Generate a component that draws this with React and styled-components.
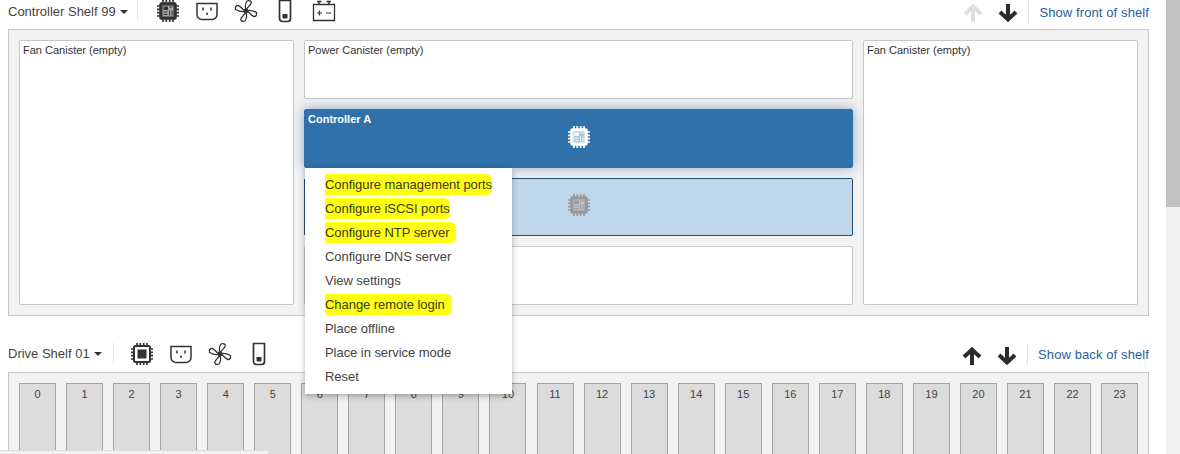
import React from 'react';
import styled, { createGlobalStyle } from 'styled-components';

const GlobalStyle = createGlobalStyle`
  html, body { margin: 0; padding: 0; background: #fff; overflow: hidden; }
  body { font-family: "Liberation Sans", Arial, sans-serif; color: #333; }
`;

const Page = styled.div`
  position: relative;
  width: 1180px;
  height: 454px;
  overflow: hidden;
  background: #fff;
`;
const Content = styled.div`
  width: 1141px;
  margin-left: 8px;
`;
const ShelfBar = styled.div`
  display: flex;
  align-items: center;
  height: ${p => p.$height}px;
  padding-bottom: ${p => p.$bottom}px;
  padding-top: ${p => p.$top || 0}px;
  box-sizing: border-box;
`;
const ShelfTitle = styled.div`
  font-size: 13px;
  color: #444;
  white-space: nowrap;
  width: ${p => p.$width}px;
`;
const Caret = styled.span`
  display: inline-block;
  width: 0;
  height: 0;
  margin-left: 4px;
  vertical-align: middle;
  border-top: 4px solid #333;
  border-left: 4px solid transparent;
  border-right: 4px solid transparent;
`;
const Divider = styled.div`
  width: 1px;
  height: 20px;
  background: #e3e3e3;
`;
const IconRow = styled.div`
  display: flex;
  align-items: center;
  gap: 15px;
  margin-left: ${p => p.$left}px;
  margin-top: ${p => p.$lift || 0}px;
`;
const BarEnd = styled.div`
  display: flex;
  align-items: center;
  margin-left: auto;
  margin-top: ${p => p.$lift}px;
`;
const ArrowBox = styled.div`
  display: flex;
  align-items: center;
  gap: 15px;
  margin-top: 2px;
  margin-right: ${p => p.$right}px;
`;
const ShelfLink = styled.a`
  font-size: 13px;
  letter-spacing: 0.1px;
  color: #2a5d9c;
  margin-left: 10px;
  white-space: nowrap;
`;
const FrontPanel = styled.div`
  display: grid;
  grid-template-columns: 275px 549px 275px;
  gap: 10px;
  height: 287px;
  box-sizing: border-box;
  padding: 10px;
  background: #f2f2f2;
  border: 1px solid #c8c8c8;
`;
const Canister = styled.div`
  background: #fff;
  border: 1px solid #c6c6c6;
  border-radius: 2px;
  padding: 3px;
  font-size: 11px;
  color: #333;
`;
const MiddleColumn = styled.div`
  display: grid;
  grid-template-rows: 59px 59px 58px 59px;
  gap: 10px;
`;
const Controller = styled.div`
  position: relative;
  display: flex;
  align-items: center;
  justify-content: center;
  background: ${p => (p.$active ? '#3071a9' : '#c0d7ea')};
  border: 1px solid ${p => (p.$active ? '#3071a9' : '#1f5078')};
  border-radius: 2px;
  box-shadow: ${p => (p.$active ? '0 0 12px rgba(40, 90, 140, 0.5)' : 'none')};
  color: #fff;
  font-size: 11px;
  font-weight: bold;
`;
const ControllerName = styled.span`
  position: absolute;
  left: 3px;
  top: 3px;
`;
const ControllerIcon = styled.div`
  display: flex;
  margin-top: -4px;
`;
const DrivePanel = styled.div`
  display: flex;
  gap: 10.06px;
  height: 120px;
  box-sizing: border-box;
  padding: 10px;
  background: #f2f2f2;
  border: 1px solid #c8c8c8;
`;
const DriveSlot = styled.div`
  flex: 0 0 37px;
  height: 100px;
  box-sizing: border-box;
  padding-top: 4px;
  background: #dcdcdc;
  border: 1px solid #a3a3a3;
  text-align: center;
  font-size: 11px;
  color: #444;
`;
const Menu = styled.ul`
  position: absolute;
  left: 305px;
  top: 168px;
  width: 207px;
  height: 226px;
  box-sizing: border-box;
  margin: 0;
  padding: 5px 0 0 20px;
  list-style: none;
  background: #fff;
  box-shadow: 0 2px 6px rgba(0, 0, 0, 0.3);
`;
const MenuItem = styled.li`
  height: 24px;
  line-height: 24px;
  font-size: 13px;
  letter-spacing: -0.05px;
  color: #444;
  white-space: nowrap;
`;
const Marked = styled.span`
  background: #ffff14;
  color: #3a3a1a;
  padding: 3px ${p => p.$tail}px 3px 0;
  border-radius: 1px 6px 5px 1px;
`;
const ScrollThumb = styled.div`
  position: absolute;
  right: 0;
  top: 0;
  bottom: 0;
  width: 14px;
  background: linear-gradient(#c1c1c1 0 207px, #f1f1f1 207px);
`;
const BottomStrip = styled.div`
  position: absolute;
  left: 0;
  bottom: 0;
  width: 268px;
  height: 3px;
  background: #f1f1f1;
  border-top: 1px solid #dcdcdc;
`;

function IconSvg({ size = 24, color = '#333', children }) {
  return (
    <svg width={size} height={size} viewBox="0 0 24 24" fill="none" stroke={color} strokeWidth="1.5" style={{ display: 'block' }}>
      {children}
    </svg>
  );
}

function ChipPins() {
  return (
    <path d="M7 1v3M10.300 1v3M13.700 1v3M17 1v3M7 20v3M10.300 20v3M13.700 20v3M17 20v3M1 7h3M1 10.300h3M1 13.700h3M1 17h3M20 7h3M20 10.300h3M20 13.700h3M20 17h3" strokeWidth="1.700" />
  );
}

function BoardChip({ color = '#333', ink = '#a6a6a6', size = 24 }) {
  return (
    <IconSvg color={color} size={size}>
      <ChipPins />
      <rect x="4" y="4" width="16" height="16" rx="1.5" fill={color} strokeWidth="1.500" />
      <rect x="6.500" y="6.500" width="11" height="11" fill={ink} stroke="none" />
      <rect x="7.500" y="7.500" width="4.500" height="3.500" fill={color} stroke="none" />
      <path d="M13.500 8h3M7.500 13h4M7.500 15.500h4M13.500 11.500v5M16 11.500v5" strokeWidth="1" stroke={color} />
    </IconSvg>
  );
}

function SolidChip() {
  return (
    <IconSvg>
      <ChipPins />
      <rect x="4" y="4" width="16" height="16" rx="1.5" strokeWidth="2" />
      <rect x="7.500" y="7.500" width="9" height="9" fill="#333" stroke="none" />
    </IconSvg>
  );
}

function Outlet() {
  return (
    <IconSvg>
      <path d="M2 4.500h20v11a5 5 0 0 1-5 5H7a5 5 0 0 1-5-5z" />
      <path d="M8 8.500v3M16 8.500v3M12 13.500v2.500" />
    </IconSvg>
  );
}

function Fan() {
  return (
    <IconSvg>
      <path d="M12 11c-1-3-1-6 1-9 3-1 5 .5 4 2.500-1 2-3.500 3.500-5 6.500z" strokeWidth="1.300" />
      <path d="M13 11.500c3-.5 6 0 9.500 2 .5 3-1 4.500-3 3.800-2-.8-4-3.300-6.500-5.800z" strokeWidth="1.300" />
      <path d="M12 13c1 3 1 6-1 9-3 1-5-.5-4-2.500 1-2 3.500-3.500 5-6.500z" strokeWidth="1.300" />
      <path d="M11 12.500c-3 .5-6 0-9.500-2-.5-3 1-4.500 3-3.800 2 .8 4 3.300 6.500 5.800z" strokeWidth="1.300" />
      <circle cx="12" cy="12" r="2.400" fill="#333" stroke="none" />
    </IconSvg>
  );
}

function Tube() {
  return (
    <IconSvg>
      <path d="M6.500 1.500h11v18a3 3 0 0 1-3 3h-5a3 3 0 0 1-3-3z" strokeWidth="1.700" />
      <path d="M9.500 15h5v3.500a1 1 0 0 1-1 1h-3a1 1 0 0 1-1-1z" fill="#333" stroke="none" />
    </IconSvg>
  );
}

function Battery() {
  return (
    <IconSvg>
      <path d="M1.500 5.500h21v16h-21z" strokeWidth="1.300" />
      <path d="M5 2.500h4.500M14.500 2.500h4.500M7 2.500v3M17 2.500v3" strokeWidth="1.500" />
      <path d="M5 14h5M7.500 11.500v5M14 14h5" strokeWidth="1.200" />
    </IconSvg>
  );
}

function Arrow({ up, color = '#2b2b2b' }) {
  return (
    <svg width="20" height="18" viewBox="0 0 20 18" fill="none" stroke={color} strokeWidth="4" style={{ display: 'block', transform: up ? 'rotate(180deg)' : 'none' }}>
      <path d="M10 0v15M2 8 10 15.500l8-7.500" />
    </svg>
  );
}

const menuItems = [
  ['Configure management ports', 0],
  ['Configure iSCSI ports', 0],
  ['Configure NTP server', 7],
  ['Configure DNS server'],
  ['View settings'],
  ['Change remote login', 7],
  ['Place offline'],
  ['Place in service mode'],
  ['Reset'],
];

export default function App() {
  return (
    <Page>
      <GlobalStyle />
      <Content>
        <ShelfBar $height={29} $bottom={7}>
          <ShelfTitle $width={129}>Controller Shelf 99<Caret /></ShelfTitle>
          <Divider />
          <IconRow $left={18}>
            <BoardChip />
            <Outlet />
            <Fan />
            <Tube />
            <Battery />
          </IconRow>
          <BarEnd $lift={2}>
            <ArrowBox $right={10}>
              <Arrow up color="#dedede" />
              <Arrow />
            </ArrowBox>
            <Divider />
            <ShelfLink>Show front of shelf</ShelfLink>
          </BarEnd>
        </ShelfBar>
        <FrontPanel>
          <Canister>Fan Canister (empty)</Canister>
          <MiddleColumn>
            <Canister>Power Canister (empty)</Canister>
            <Controller $active>
              <ControllerName>Controller A</ControllerName>
              <ControllerIcon><BoardChip color="#fff" ink="#a9c4dc" /></ControllerIcon>
            </Controller>
            <Controller>
              <ControllerIcon><BoardChip color="#999" ink="#b4bfc8" /></ControllerIcon>
            </Controller>
            <Canister />
          </MiddleColumn>
          <Canister>Fan Canister (empty)</Canister>
        </FrontPanel>
        <ShelfBar $height={56} $bottom={0} $top={18}>
          <ShelfTitle $width={105}>Drive Shelf 01<Caret /></ShelfTitle>
          <Divider />
          <IconRow $left={16} $lift={2}>
            <SolidChip />
            <Outlet />
            <Fan />
            <Tube />
          </IconRow>
          <BarEnd $lift={3}>
            <ArrowBox $right={10}>
              <Arrow up />
              <Arrow />
            </ArrowBox>
            <Divider />
            <ShelfLink>Show back of shelf</ShelfLink>
          </BarEnd>
        </ShelfBar>
        <DrivePanel>
          {Array.from({ length: 24 }, (_, i) => (
            <DriveSlot key={i}>{i}</DriveSlot>
          ))}
        </DrivePanel>
      </Content>
      <Menu>
        {menuItems.map(([label, tail]) => (
          <MenuItem key={label}>
            {tail === undefined ? label : <Marked $tail={tail}>{label}</Marked>}
          </MenuItem>
        ))}
      </Menu>
      <ScrollThumb />
      <BottomStrip />
    </Page>
  );
}
